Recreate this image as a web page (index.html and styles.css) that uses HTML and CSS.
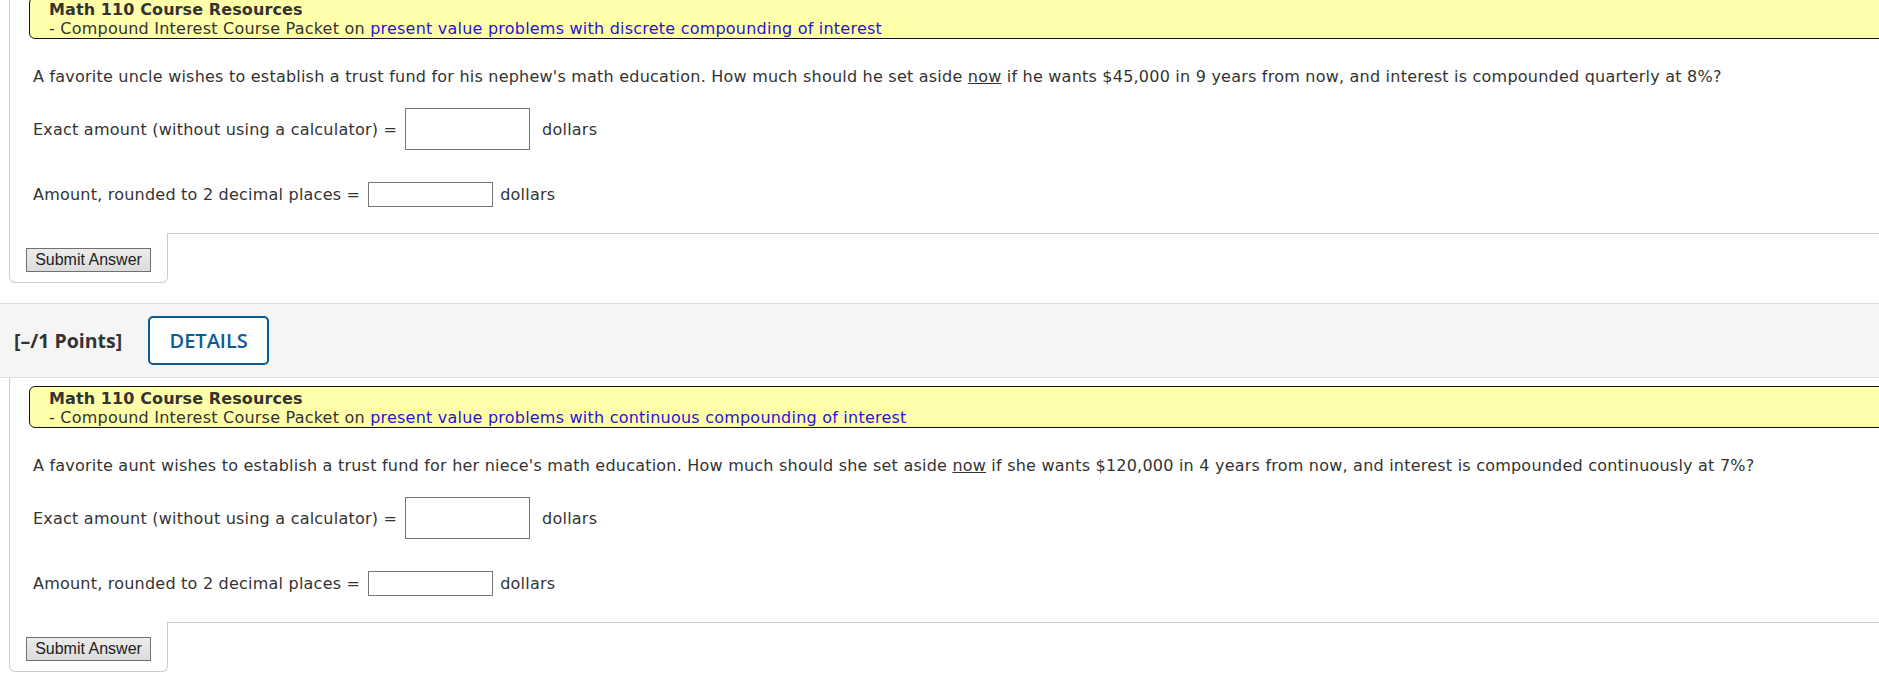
FILE: index.html
```html
<!DOCTYPE html>
<html lang="en">
<head>
    <meta charset="UTF-8">
    <title>Compound Interest - Present Value</title>
    <link rel="stylesheet" href="styles.css">
</head>
<body>
    <div class="page">
        <div class="question first">
            <div class="question-body">
                <div class="resource-box">
                    <div class="resource-title">Math 110 Course Resources</div>
                    <div>- Compound Interest Course Packet on <a href="#">present value problems with discrete compounding of interest</a></div>
                </div>

                <p class="prompt">A favorite uncle wishes to establish a trust fund for his nephew's math education. How much should he set aside <u>now</u> if he wants $45,000 in 9 years from now, and interest is compounded quarterly at 8%?</p>

                <div class="answer-row exact">
                    <label>Exact amount (without using a calculator) =</label>
                    <input type="text" class="tall-input">
                    <span class="unit wide">dollars</span>
                </div>

                <div class="answer-row rounded">
                    <label>Amount, rounded to 2 decimal places =</label>
                    <input type="text" class="short-input">
                    <span class="unit">dollars</span>
                </div>
            </div>
            <div class="submit-tab">
                <button type="button" class="submit-btn">Submit Answer</button>
            </div>
        </div>

        <div class="points-bar">
            <span class="points">[&ndash;/1 Points]</span>
            <button type="button" class="details-btn">DETAILS</button>
        </div>

        <div class="question">
            <div class="question-body">
                <div class="resource-box">
                    <div class="resource-title">Math 110 Course Resources</div>
                    <div>- Compound Interest Course Packet on <a href="#">present value problems with continuous compounding of interest</a></div>
                </div>

                <p class="prompt">A favorite aunt wishes to establish a trust fund for her niece's math education. How much should she set aside <u>now</u> if she wants $120,000 in 4 years from now, and interest is compounded continuously at 7%?</p>

                <div class="answer-row exact">
                    <label>Exact amount (without using a calculator) =</label>
                    <input type="text" class="tall-input">
                    <span class="unit wide">dollars</span>
                </div>

                <div class="answer-row rounded">
                    <label>Amount, rounded to 2 decimal places =</label>
                    <input type="text" class="short-input">
                    <span class="unit">dollars</span>
                </div>
            </div>
            <div class="submit-tab">
                <button type="button" class="submit-btn">Submit Answer</button>
            </div>
        </div>
    </div>
</body>
</html>
```

FILE: styles.css
```css
* {
    margin: 0;
    padding: 0;
    box-sizing: border-box;
}

body {
    font-family: 'DejaVu Sans', Verdana, sans-serif;
    font-size: 16px;
    letter-spacing: 0.22px;
    color: #333;
    background: white;
    overflow: hidden;
}

/* the view is scrolled a little: the first box starts above the top edge */
.page {
    margin-top: -11px;
}

.question {
    margin-left: 9px;
    margin-right: -60px;
}

.question-body {
    border-left: 1px solid #ccc;
    border-bottom: 1px solid #ccc;
    padding: 8px 0 26px 19px;
}

.resource-box {
    background: #ffffaa;
    border: 1px solid #111;
    border-radius: 6px;
    padding: 2px 19px 0;
    line-height: 19px;
}

.resource-title {
    font-weight: bold;
    letter-spacing: 0.1px;
}

.resource-box a {
    color: #2a14d4;
    text-decoration: none;
}

.prompt {
    margin-top: 28px;
    padding-left: 4px;
    line-height: 19px;
}

.answer-row {
    display: flex;
    align-items: center;
    padding-left: 4px;
}

.answer-row label {
    margin-right: 8px;
}

.answer-row.exact {
    margin-top: 22px;
}

.answer-row.rounded {
    margin-top: 32px;
}

.answer-row input {
    width: 125px;
    border: 1px solid #767676;
    background: white;
}

.tall-input {
    height: 42px;
}

.short-input {
    height: 25px;
}

.unit {
    margin-left: 7px;
}

.unit.wide {
    margin-left: 12px;
}

.submit-tab {
    display: inline-block;
    margin-top: -1px;
    background: white;
    border: 1px solid #ccc;
    border-top: none;
    border-radius: 0 0 6px 6px;
    padding: 15px 16px 10px;
}

.submit-btn {
    display: block;
    width: 125px;
    height: 24px;
    font-family: 'Liberation Sans', Arial, sans-serif;
    font-size: 16px;
    letter-spacing: 0;
    color: #222;
    background: linear-gradient(#ececec, #dcdcdc);
    border: 1px solid #707070;
}

.points-bar {
    display: flex;
    align-items: center;
    margin-top: 20px;
    height: 75px;
    background: #f5f5f5;
    border-top: 1px solid #ddd;
    border-bottom: 1px solid #ddd;
    padding-left: 14px;
}

.points {
    font-family: 'Open Sans', sans-serif;
    font-weight: bold;
    font-size: 19.5px;
    letter-spacing: 0;
    color: #333;
}

.details-btn {
    margin-left: 26px;
    width: 121px;
    height: 49px;
    font-family: 'Open Sans', sans-serif;
    font-weight: 600;
    font-size: 20px;
    letter-spacing: 0;
    color: #0b5c94;
    background: white;
    border: 2px solid #0b5c94;
    border-radius: 5px;
}
```
